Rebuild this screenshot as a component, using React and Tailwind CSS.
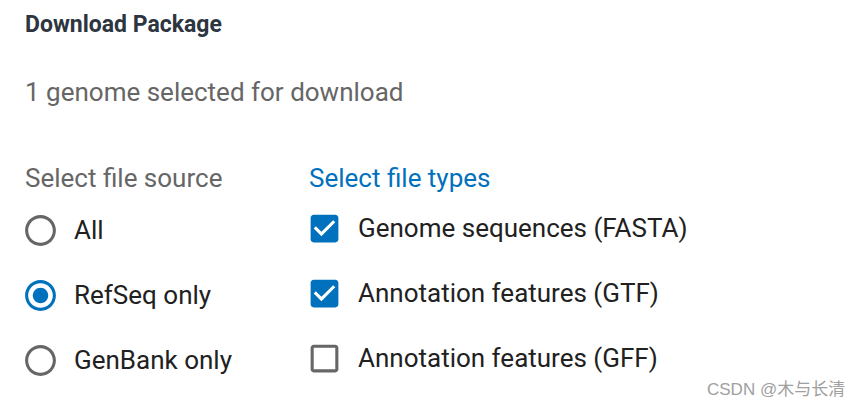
import React from 'react'

const sources = [
  { label: 'All', checked: false },
  { label: 'RefSeq only', checked: true },
  { label: 'GenBank only', checked: false },
]

const types = [
  { label: 'Genome sequences (FASTA)', checked: true },
  { label: 'Annotation features (GTF)', checked: true },
  { label: 'Annotation features (GFF)', checked: false },
]

const RadioIcon = ({ checked }) => (
  <svg viewBox="0 0 24 24" className="w-[37px] h-[37px] shrink-0" fill={checked ? '#0071bc' : '#666666'}>
    <path d="M12 2C6.48 2 2 6.48 2 12s4.48 10 10 10 10-4.48 10-10S17.52 2 12 2zm0 18c-4.42 0-8-3.58-8-8s3.58-8 8-8 8 3.58 8 8-3.58 8-8 8z" />
    {checked && <path d="M12 7c-2.76 0-5 2.24-5 5s2.24 5 5 5 5-2.24 5-5-2.24-5-5-5z" />}
  </svg>
)

const CheckIcon = ({ checked }) => (
  <svg viewBox="0 0 24 24" className="w-[37px] h-[37px] shrink-0" fill={checked ? '#0071bc' : '#666666'}>
    {checked ? (
      <path d="M19 3H5c-1.11 0-2 .9-2 2v14c0 1.1.89 2 2 2h14c1.11 0 2-.9 2-2V5c0-1.1-.89-2-2-2zm-9 14l-5-5 1.41-1.41L10 14.17l7.59-7.59L19 8l-9 9z" />
    ) : (
      <path d="M19 5v14H5V5h14m0-2H5c-1.1 0-2 .9-2 2v14c0 1.1.9 2 2 2h14c1.1 0 2-.9 2-2V5c0-1.1-.9-2-2-2z" />
    )}
  </svg>
)

export default function App() {
  return (
    <div className="relative w-[858px] h-[408px] bg-white overflow-hidden font-['Roboto',sans-serif] pt-[11px] pl-[25px]">
      <h2 className="text-[23px] leading-[27px] font-bold text-[#2d3540]">Download Package</h2>
      <p className="mt-[39px] text-[26px] leading-[30px] text-[#666666]">1 genome selected for download</p>

      <div className="mt-[56px] flex">
        <div className="w-[284px]">
          <div className="text-[26px] leading-[30px] text-[#666666]">Select file source</div>
          <div className="mt-[17px] flex flex-col gap-[25px]">
            {sources.map((s) => (
              <div key={s.label} className="h-[40px] flex items-center ml-[-3px]">
                <RadioIcon checked={s.checked} />
                <span className="ml-[15px] text-[26px] leading-[30px] text-[#212121]">{s.label}</span>
              </div>
            ))}
          </div>
        </div>
        <div>
          <div className="text-[26px] leading-[30px] text-[#0071bc]">Select file types</div>
          <div className="mt-[15px] flex flex-col gap-[25px]">
            {types.map((t) => (
              <div key={t.label} className="h-[40px] flex items-center ml-[-3px]">
                <CheckIcon checked={t.checked} />
                <span className="ml-[15px] text-[26px] leading-[30px] text-[#212121]">{t.label}</span>
              </div>
            ))}
          </div>
        </div>
      </div>

      <div className="absolute left-[707px] top-[380px] text-[17px] leading-[20px] text-[#a0a0a0] font-['Liberation_Sans','Noto_Sans_CJK_SC',sans-serif]">
        CSDN @木与长清
      </div>
    </div>
  )
}
